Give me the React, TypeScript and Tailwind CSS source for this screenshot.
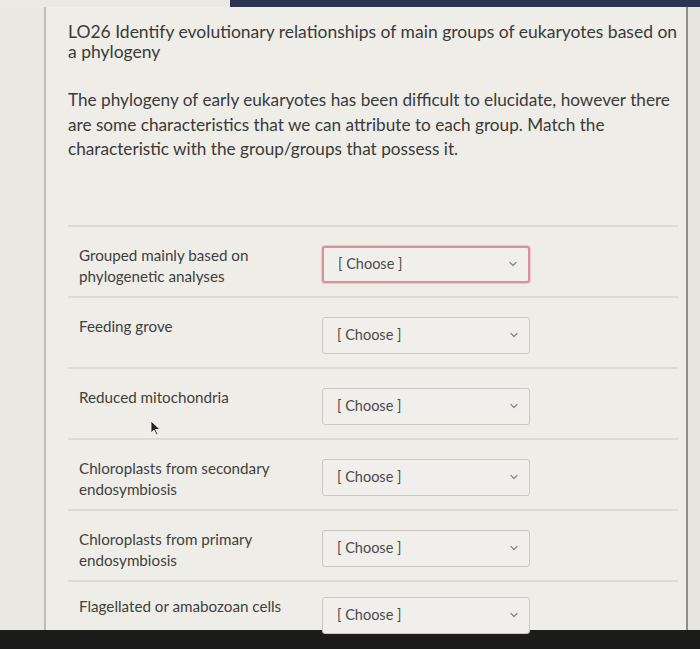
import { ChevronDown } from 'lucide-react';

const ROWS: { label: string[]; invalid?: boolean }[] = [
  { label: ['Grouped mainly based on', 'phylogenetic analyses'], invalid: true },
  { label: ['Feeding grove'] },
  { label: ['Reduced mitochondria'] },
  { label: ['Chloroplasts from secondary', 'endosymbiosis'] },
  { label: ['Chloroplasts from primary', 'endosymbiosis'] },
  { label: ['Flagellated or amabozoan cells'] },
];

function ChooseSelect({ invalid }: { invalid?: boolean }) {
  return (
    <div
      className={`flex h-[37px] w-[208px] items-center justify-between rounded-[3px] bg-[#f0efeb] pl-[14px] pr-[9px] ${
        invalid
          ? 'border-2 border-[#d8909c] shadow-[0_0_0_1px_#ecc6cc]'
          : 'border border-[#c9c8c3]'
      }`}
    >
      <span className="text-[14.5px] text-[#4a4a4a]">[ Choose ]</span>
      <ChevronDown size={12} strokeWidth={2.5} className="text-[#8a8a8a]" />
    </div>
  );
}

export default function App() {
  return (
    <div className="flex h-[649px] w-[700px] flex-col overflow-hidden bg-[#eeede8] font-['Lato','Noto_Sans',sans-serif] text-[#3b3b3b]">
      {/* browser chrome sliver at the top */}
      <div className="flex h-[7px] shrink-0">
        <div className="w-[230px] bg-[#ebe9e4]" />
        <div className="flex-1 bg-[#2c3252]" />
      </div>

      <div className="flex min-h-0 flex-1">
        <div className="w-[46px] shrink-0 border-r-2 border-[#bdbcb7] bg-[#e9e8e2]" />

        <div className="relative flex w-[642px] shrink-0 flex-col border-r-2 border-[#8e8d89] pl-[22px] pr-[6px]">
          <h2 className="mt-[15px] text-[17.5px] leading-[20px] text-[#3a3a3a]">
            LO26 Identify evolutionary relationships of main groups of eukaryotes based on a phylogeny
          </h2>
          <p className="mt-[26px] text-[17.2px] leading-[24.5px] text-[#3a3a3a]">
            The phylogeny of early eukaryotes has been difficult to elucidate, however there are some
            characteristics that we can attribute to each group. Match the characteristic with the
            group/groups that possess it.
          </p>

          <div className="mr-[2px] mt-[63px] border-t-2 border-[#dcdbd6]">
            {ROWS.map((row, i) => (
              <div
                key={i}
                className={`grid grid-cols-[243px_208px] items-start pl-[11px] ${
                  i < ROWS.length - 1 ? 'h-[71px] border-b-2 border-[#dcdbd6] pt-[19px]' : 'h-[60px] pt-[15px]'
                }`}
              >
                <div className="-mt-[1px] text-[15.2px] leading-[21px] text-[#3f3f3f]">
                  {row.label.map((l) => (
                    <div key={l}>{l}</div>
                  ))}
                </div>
                <ChooseSelect invalid={row.invalid} />
              </div>
            ))}
          </div>

          {/* mouse pointer */}
          <svg
            className="absolute left-[104px] top-[413px]"
            width="12"
            height="16"
            viewBox="0 0 12 16"
          >
            <path d="M1 1 L1 13 L4 10 L6.5 15 L8 14.3 L5.6 9.5 L10 9.5 Z" fill="#222" stroke="#fff" strokeWidth="0.8" />
          </svg>
        </div>

        <div className="flex-1 bg-[#e6e5df]" />
      </div>

      <div className="h-[19px] shrink-0 bg-[#1c1c1c]" />
    </div>
  );
}
